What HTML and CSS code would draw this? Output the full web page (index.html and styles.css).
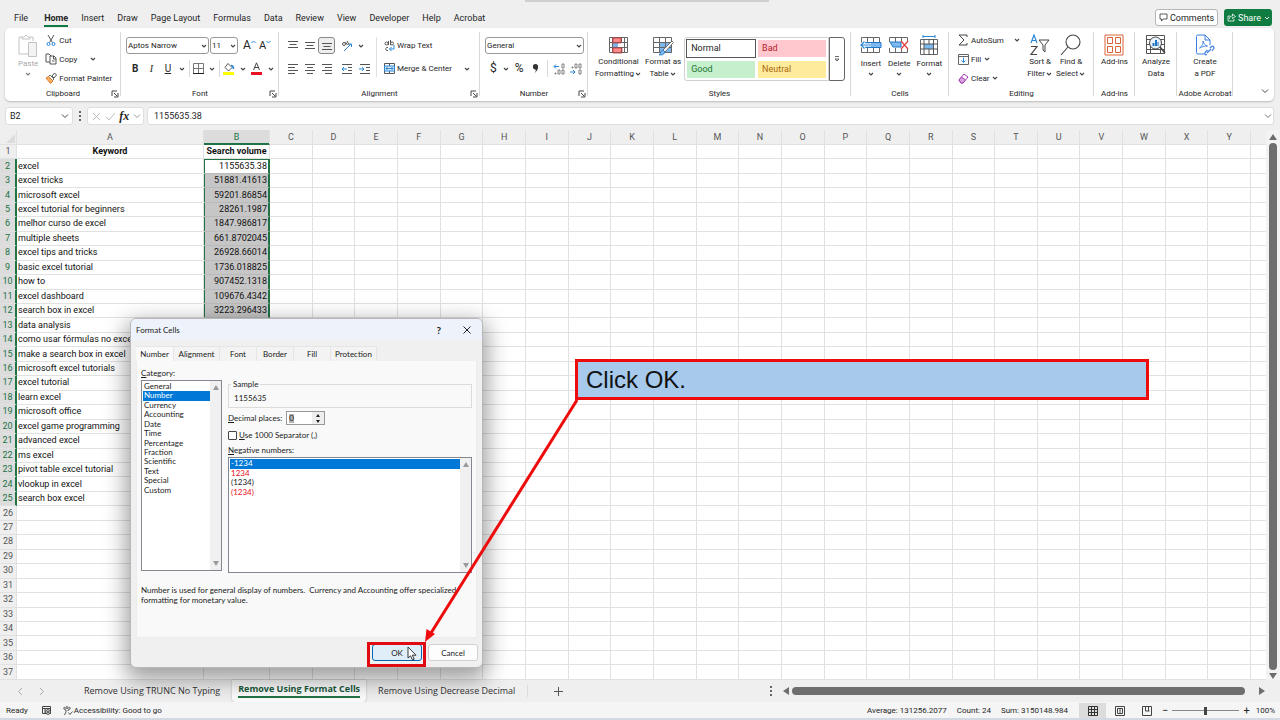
FILE: index.html
```html
<!DOCTYPE html>
<html lang="en">
<head>
<meta charset="utf-8">
<title>Excel - Format Cells</title>
<link rel="stylesheet" href="styles.css">
</head>
<body>
<svg class="defs" aria-hidden="true">
  <symbol id="chev" viewBox="0 0 8 8"><path d="M2 3l2 2 2-2" fill="none" stroke="#444" stroke-width="1.1"/></symbol>
  <symbol id="launch" viewBox="0 0 8 8"><path d="M1 6V1h5M3 3l3 3M7 3v4H3" fill="none" stroke="#444"/></symbol>
</svg>
<div class="app">
  <div class="grip"></div>
  <header class="menu">
    <nav class="tabs">
      <button class="file">File</button><button class="on">Home</button><button>Insert</button><button>Draw</button><button>Page Layout</button><button>Formulas</button><button>Data</button><button>Review</button><button>View</button><button>Developer</button><button>Help</button><button>Acrobat</button>
    </nav>
    <button class="comments"><svg width="9" height="9" viewBox="0 0 9 9"><path d="M1 1h7v5H4L2.500 8V6H1z" fill="none" stroke="#333" stroke-width=".8"/></svg>Comments</button>
    <button class="share"><svg width="9" height="9" viewBox="0 0 9 9"><path d="M3 3H1v5h6V6M2.500 6c0-2 1-3 3-3V1l3 2.500-3 2V4.200" fill="none" stroke="#fff" stroke-width=".8"/></svg>Share<svg width="8" height="8" viewBox="0 0 8 8"><path d="M2 3l2 2 2-2" fill="none" stroke="#fff"/></svg></button>
  </header>

  <section class="ribbon">
    <div class="group clip">
      <div class="body">
        <button class="big off"><svg width="20" height="24" viewBox="0 0 20 24"><path d="M4 3H1v17h9M12 3h3v4" fill="none" stroke="#aaa"/><path d="M4 5V3h2l2-2 2 2h2v2z" fill="#fff" stroke="#aaa"/><path d="M10.500 8.500h8v14h-8z" fill="#eee" stroke="#aaa"/></svg><span>Paste</span><svg width="8" height="8"><use href="#chev"/></svg></button>
        <div class="list">
          <button><svg width="12" height="12" viewBox="0 0 12 12"><path d="M3 1l4.500 7.500M9 1L4.500 8.500" stroke="#555" fill="none"/><circle cx="3.500" cy="10" r="1.500" fill="none" stroke="#2b88d8"/><circle cx="8.500" cy="10" r="1.500" fill="none" stroke="#2b88d8"/></svg>Cut</button>
          <button><svg width="12" height="12" viewBox="0 0 12 12"><path d="M5 9H1V1h3l2 2M5 3h4l2 2v6H5zM8.500 3v3H11M7 8h2.500" stroke="#444" fill="none" stroke-width=".9"/></svg>Copy<svg class="far" width="8" height="8"><use href="#chev"/></svg></button>
          <button><svg width="12" height="12" viewBox="0 0 12 12"><path d="M7 4l2.500-3 2 2L9 6z" fill="#fff" stroke="#444" stroke-width=".9"/><path d="M5 3l4 4-1.500 1.500-4-4z" fill="#fff" stroke="#444" stroke-width=".8"/><path d="M3.500 4.500L1 6l4.500 5.500L8 9z" fill="#f7b26a" stroke="#d8701a" stroke-width=".9"/></svg>Format Painter</button>
        </div>
      </div>
      <div class="foot">Clipboard<svg width="8" height="8"><use href="#launch"/></svg></div>
    </div>

    <div class="group font">
      <div class="body rows">
        <div class="row">
          <div class="combo name"><select aria-label="Font"><option>Aptos Narrow</option></select><svg width="8" height="8"><use href="#chev"/></svg></div>
          <div class="combo size"><select aria-label="Font size"><option>11</option></select><svg width="8" height="8"><use href="#chev"/></svg></div>
          <button class="grow" aria-label="Increase font size">A<svg width="5" height="4" viewBox="0 0 5 4"><path d="M.5 3l2-2 2 2" fill="none" stroke="#2b88d8"/></svg></button>
          <button class="shrink" aria-label="Decrease font size">A<svg width="5" height="4" viewBox="0 0 5 4"><path d="M.5 1l2 2 2-2" fill="none" stroke="#2b88d8"/></svg></button>
        </div>
        <div class="row biu">
          <button class="b">B</button><button class="i">I</button><button class="u">U</button><svg width="8" height="8"><use href="#chev"/></svg><i class="sep"></i>
          <svg width="11" height="11" viewBox="0 0 11 11"><path d="M.5.5h10v10H.5zM5.500 1v9M1 5.500h9" fill="none" stroke="#777"/><path d="M0 10.500h11" stroke="#222"/></svg><svg width="8" height="8"><use href="#chev"/></svg><i class="sep"></i>
          <svg width="12" height="13" viewBox="0 0 12 13"><path d="M5 1.500L9 5.500 5.500 9 2 5.500z" fill="#fff" stroke="#444" stroke-width=".9"/><path d="M8 3.500c2 0 2.500 2 2.500 3.500" stroke="#2b88d8" fill="none" stroke-width="1.500"/><path d="M0 10h11v3H0z" fill="#ffff00"/></svg><svg width="8" height="8"><use href="#chev"/></svg>
          <svg width="12" height="13" viewBox="0 0 12 13"><path d="M2.500 8L5.500.800 8.500 8M3.500 5.500h4" fill="none" stroke="#444"/><path d="M0 10h11v3H0z" fill="#e81123"/></svg><svg width="8" height="8"><use href="#chev"/></svg>
        </div>
      </div>
      <div class="foot">Font<svg width="8" height="8"><use href="#launch"/></svg></div>
    </div>

    <div class="group align">
      <div class="body">
        <div class="alignment-grid">
          <button aria-label="Top align"><svg width="11" height="11" viewBox="0 0 11 11"><path d="M1 1.500h10M2.500 4.500h7M1 7.500h10" stroke="#555"/></svg></button>
          <button aria-label="Middle align"><svg width="11" height="11" viewBox="0 0 11 11"><path d="M1 2.500h10M2.500 5.500h7M1 8.500h10" stroke="#555"/></svg></button>
          <button class="on" aria-label="Bottom align"><svg width="11" height="11" viewBox="0 0 11 11"><path d="M1 3.500h10M2.500 6.500h7M1 9.500h10" stroke="#555"/></svg></button>
          <button class="wide" aria-label="Orientation"><svg width="12" height="12" viewBox="0 0 12 12"><circle cx="3" cy="4" r="1.500" fill="none" stroke="#555"/><path d="M4.500 2l2 3M6 1l2.500 4.500" stroke="#555"/><path d="M3 11l7-7M7.500 4H10.500v3" fill="none" stroke="#2b88d8"/></svg><svg width="8" height="8"><use href="#chev"/></svg></button>
          <button aria-label="Align left"><svg width="11" height="11" viewBox="0 0 11 11"><path d="M1 1.500h10M1 4.500h7M1 7.500h10M1 10.500h7" stroke="#555"/></svg></button>
          <button aria-label="Center"><svg width="11" height="11" viewBox="0 0 11 11"><path d="M1 1.500h10M3 4.500h6M1 7.500h10M3 10.500h6" stroke="#555"/></svg></button>
          <button aria-label="Align right"><svg width="11" height="11" viewBox="0 0 11 11"><path d="M1 1.500h10M4 4.500h7M1 7.500h10M4 10.500h7" stroke="#555"/></svg></button>
          <div class="indent"><svg width="11" height="11" viewBox="0 0 11 11"><path d="M1 1.500h10M7 4.500h4M7 7.500h4M1 10.500h10" stroke="#555"/><path d="M6 6H1M3 4L1 6l2 2" fill="none" stroke="#2b88d8"/></svg><svg width="11" height="11" viewBox="0 0 11 11"><path d="M1 1.500h10M7 4.500h4M7 7.500h4M1 10.500h10" stroke="#555"/><path d="M0 6h5M3 4l2 2-2 2" fill="none" stroke="#2b88d8"/></svg></div>
        </div>
        <div class="wrapcol">
          <button><svg width="11" height="12" viewBox="0 0 11 12"><circle cx="2.500" cy="3.500" r="1.500" fill="none" stroke="#555"/><path d="M4.500 1v4M6.500 0v5" stroke="#555"/><circle cx="8" cy="3.500" r="1.500" fill="none" stroke="#555"/><path d="M4 7.500c-3-1-3 4 0 3" fill="none" stroke="#555"/><path d="M10 5v4H5.500M7.500 7l-2 2 2 2" fill="none" stroke="#2b88d8"/></svg>Wrap Text</button>
          <button><svg width="11" height="11" viewBox="0 0 11 11"><path d="M.5.5h10v10H.5zM5.500.500V3M5.500 8v3" fill="none" stroke="#555"/><path d="M.5 3h10v5H.5z" fill="#d5e9f9" stroke="#2b88d8"/><path d="M2 5.500h7M3.500 4L2 5.500 3.500 7M7.500 4L9 5.500 7.500 7" fill="none" stroke="#1a6fc0" stroke-width=".8"/></svg>Merge &amp; Center<svg class="far" width="8" height="8"><use href="#chev"/></svg></button>
        </div>
      </div>
      <div class="foot">Alignment<svg width="8" height="8"><use href="#launch"/></svg></div>
    </div>

    <div class="group num">
      <div class="body rows">
        <div class="combo"><select aria-label="Number format"><option>General</option></select><svg width="8" height="8"><use href="#chev"/></svg></div>
        <div class="row fmt"><button>$</button><svg width="8" height="8"><use href="#chev"/></svg><button>%</button><button class="comma" aria-label="Comma style"><svg width="7" height="11" viewBox="0 0 7 11"><path d="M1.500 10.500C4 9 4 7.500 3.500 6.500 0 6.500 0 1 3.500 1 7.500 1 7 8 1.500 10.500z" fill="#333"/></svg></button><i class="sep"></i>
          <svg width="12" height="12" viewBox="0 0 12 12"><path d="M6 3.500H1M3 1.500l-2 2 2 2" fill="none" stroke="#2b88d8"/><path d="M9 1h2v4H9zM5 7h2v4H5zM9 7h2v4H9zM2 10h1v1H2z" fill="none" stroke="#666" stroke-width=".8"/></svg>
          <svg width="12" height="12" viewBox="0 0 12 12"><path d="M0 9h5M3 7l2 2-2 2" fill="none" stroke="#2b88d8"/><path d="M5 1h2v4H5zM9 1h2v4H9zM9 7h2v4H9zM2 4h1v1H2z" fill="none" stroke="#666" stroke-width=".8"/></svg>
        </div>
      </div>
      <div class="foot">Number<svg width="8" height="8"><use href="#launch"/></svg></div>
    </div>

    <div class="group styles">
      <div class="body">
        <button class="big"><svg width="20" height="20" viewBox="0 0 20 20"><path d="M1 2h18v15H1z" fill="#fff"/><path d="M4 2h8v5H4zM4 12h9v5H4z" fill="#ff8a8a"/><path d="M4 7h5v5H4z" fill="#7db4ea"/><path d="M.500 1.500h18v15H.500zM0 6.500h19M0 11.500h19M3.500 1v16M12.500 1v6M12.500 12v5M15.500 1v16" fill="none" stroke="#666"/><path d="M4 2h8v5H4zM4 12h9v5H4z" fill="none" stroke="#d13438" stroke-width=".8"/></svg><span>Conditional<br>Formatting<svg width="8" height="8"><use href="#chev"/></svg></span></button>
        <button class="big"><svg width="21" height="20" viewBox="0 0 21 20"><path d="M7 6h12v11H7z" fill="#7db9ee"/><path d="M.500 1.500h18v15H.500zM0 6.500h19M0 11.500h19M6.500 1v16M12.500 1v16" fill="none" stroke="#666"/><path d="M19 5l1.500 1.500L12 16l-2-2z" fill="#fff" stroke="#555" stroke-width=".8"/><path d="M10 14l2 2c-1 3-3 3-6 3 2-1 1-4 4-5z" fill="#7db9ee" stroke="#2277c5" stroke-width=".8"/></svg><span>Format as<br>Table<svg width="8" height="8"><use href="#chev"/></svg></span></button>
        <div class="gallery">
          <div class="swatches"><button class="normal">Normal</button><button class="bad">Bad</button><button class="good">Good</button><button class="neutral">Neutral</button></div>
          <button class="more" aria-label="More styles"><svg width="8" height="8" viewBox="0 0 8 8"><path d="M2 1.500h4M2 4h4L4 6z" fill="none" stroke="#444" stroke-width=".8"/></svg></button>
        </div>
      </div>
      <div class="foot">Styles</div>
    </div>

    <div class="group cells">
      <div class="body">
        <button class="big"><svg width="22" height="20" viewBox="0 0 22 20"><path d="M1.500 1.500h18v15h-18zM7.500 1v16M13.500 1v16" fill="#fff" stroke="#666"/><path d="M4 6.500h17v5H4z" fill="#7db9ee" stroke="#2277c5"/><path d="M0 7h4v4H0z" fill="#fff"/><path d="M11 9H1M4.500 5.500L1 9l3.500 3.500" fill="none" stroke="#fff" stroke-width="3"/><path d="M11 9H1M4.500 5.500L1 9l3.500 3.500" fill="none" stroke="#2b88d8" stroke-width="1.200"/></svg><span>Insert</span><svg width="8" height="8"><use href="#chev"/></svg></button>
        <button class="big"><svg width="22" height="20" viewBox="0 0 22 20"><path d="M1.500 1.500h18v15h-18zM7.500 1v16M13.500 1v16" fill="#fff" stroke="#666"/><path d="M0 6h21v6H0z" fill="#fff"/><path d="M2 6h11v5H5z" fill="#7db9ee" stroke="#2277c5"/><path d="M13 5l7 8M20 5l-7 8" stroke="#e03c3c" stroke-width="1.200"/></svg><span>Delete</span><svg width="8" height="8"><use href="#chev"/></svg></button>
        <button class="big fm"><svg width="20" height="23" viewBox="0 0 20 23"><path d="M4 1.500h12M4 0v3M16 0v3" stroke="#2b88d8"/><path d="M1.500 4.500h17v15h-17z" fill="#fff" stroke="#666"/><path d="M5 9h9v5H5z" fill="#7db9ee"/><path d="M1 9h18M1 14h18M5 4v16M10 4v5M10 14v6M14.500 4v16" fill="none" stroke="#555"/></svg><span>Format</span><svg width="8" height="8"><use href="#chev"/></svg></button>
      </div>
      <div class="foot">Cells</div>
    </div>

    <div class="group edit">
      <div class="body">
        <div class="list">
          <button><svg width="11" height="12" viewBox="0 0 11 12"><path d="M9 3V1H1l5 5-5 5h8V9" fill="none" stroke="#444"/></svg>AutoSum<svg class="far" width="8" height="8"><use href="#chev"/></svg></button>
          <button><svg width="11" height="11" viewBox="0 0 11 11"><path d="M.500.500h10v10H.500zM1 2.500h9" fill="none" stroke="#666"/><path d="M5.500 3.500v5M3.500 6.500l2 2 2-2" fill="none" stroke="#2b88d8"/></svg>Fill<svg width="8" height="8"><use href="#chev"/></svg></button>
          <button><svg width="11" height="11" viewBox="0 0 11 11"><path d="M1 7l5-6 4 3-5 6H3z" fill="#fff" stroke="#a33bb5"/><path d="M1 7l2.500-3L7.500 7 5 10H3z" fill="#d9a3e0" stroke="#a33bb5"/></svg>Clear<svg width="8" height="8"><use href="#chev"/></svg></button>
        </div>
        <button class="big"><svg width="22" height="22" viewBox="0 0 22 22"><path d="M2 9l3-8 3 8M3 6.500h4" fill="none" stroke="#2b88d8" stroke-width="1.200"/><path d="M2 12.500h6L2 20.500h6" fill="none" stroke="#444" stroke-width="1.200"/><path d="M10 6h10l-4 5v7l-2-2v-5z" fill="#fff" stroke="#444"/></svg><span>Sort &amp;<br>Filter<svg width="8" height="8"><use href="#chev"/></svg></span></button>
        <button class="big"><svg width="22" height="22" viewBox="0 0 22 22"><circle cx="13" cy="8" r="7" fill="none" stroke="#444" stroke-width="1.100"/><path d="M8 13l-7 8" stroke="#444" stroke-width="1.100"/></svg><span>Find &amp;<br>Select<svg width="8" height="8"><use href="#chev"/></svg></span></button>
      </div>
      <div class="foot">Editing</div>
    </div>

    <div class="group">
      <div class="body"><button class="big"><svg width="20" height="22" viewBox="0 0 20 22"><path d="M1 1h18v20H1zM3.500 3.500h5v6h-5zM11.500 3.500h5v6h-5zM3.500 12.500h5v6h-5zM11.500 12.500h5v6h-5z" fill="none" stroke="#d9623b"/></svg><span>Add-ins</span></button></div>
      <div class="foot">Add-ins</div>
    </div>
    <div class="group">
      <div class="body"><button class="big"><svg width="20" height="22" viewBox="0 0 20 22"><path d="M.500 1.500h18v18H.500zM0 5.500h19M0 10.500h19M0 15.500h19M4.500 5v15M14.500 5v15" fill="none" stroke="#555"/><circle cx="9.500" cy="9" r="6" fill="#e8f2fb" stroke="#444"/><path d="M14 13l5 6" stroke="#444" stroke-width="1.500"/><path d="M6.500 9h2v3h-2zM9 6h2v6H9zM11.500 8h1v4h-1z" fill="#2277c5"/></svg><span>Analyze<br>Data</span></button></div>
      <div class="foot"></div>
    </div>
    <div class="group">
      <div class="body"><button class="big"><svg width="20" height="22" viewBox="0 0 20 22"><path d="M9 20H3q-1.500 0-1.500-1.500v-16Q1.500 1 3 1h7l5 5v5" fill="none" stroke="#3b7de0"/><path d="M10 1v5h5" fill="none" stroke="#3b7de0"/><path d="M4.500 14c3-2 4-5 3.500-7 1 3 2 4.500 4.500 5-3 0-5 .500-8 2z" fill="none" stroke="#3b7de0" stroke-width=".9"/><path d="M12 19l4-4M10.500 18l2-2M12 20.500c-2 1-3-1-1.500-2.500M15 14l1.500-1.500c2-1 3 1 2 2.500L17 17" fill="none" stroke="#3b7de0" stroke-width="1.200"/></svg><span>Create<br>a PDF</span></button></div>
      <div class="foot">Adobe Acrobat</div>
    </div>
    <button class="collapse" aria-label="Collapse ribbon"><svg width="8" height="6" viewBox="0 0 8 6"><path d="M1 1.500l3 3 3-3" fill="none" stroke="#444"/></svg></button>
  </section>

  <div class="fbar">
    <div class="box namebox"><input value="B2" aria-label="Name box"><svg width="8" height="6" viewBox="0 0 8 6"><path d="M1 1.500l3 3 3-3" fill="none" stroke="#444"/></svg></div>
    <div class="dots"><i></i><i></i><i></i></div>
    <div class="box fx"><svg width="9" height="9" viewBox="0 0 9 9"><path d="M1 1l7 7M8 1L1 8" stroke="#bbb"/></svg><svg width="11" height="9" viewBox="0 0 11 9"><path d="M1 5l3 3 6-7" fill="none" stroke="#bbb"/></svg><b>fx</b><svg width="8" height="6" viewBox="0 0 8 6"><path d="M1 1.500l3 3 3-3" fill="none" stroke="#999"/></svg></div>
    <div class="box formula"><input value="1155635.38" aria-label="Formula bar"><svg width="8" height="6" viewBox="0 0 8 6"><path d="M1 1.500l3 3 3-3" fill="none" stroke="#777"/></svg></div>
  </div>

  <div class="work">
    <div class="gridwrap"><table class="sheet">
      <colgroup id="cols"><col class="rh"><col class="ca"><col class="cb"></colgroup>
      <thead><tr id="heads"><th class="corner"><svg width="9" height="9" viewBox="0 0 9 9"><path d="M9 0v9H0z" fill="#dcdcdc"/></svg></th></tr></thead>
      <tbody id="rows"></tbody>
    </table></div>
    <div class="vscroll"><i class="up"></i><i class="thumb"></i><i class="down"></i></div>
  </div>

  <footer class="sheets">
    <div class="nav"><svg width="6" height="9" viewBox="0 0 6 9"><path d="M5 1L1.500 4.500 5 8" fill="none" stroke="#aaa"/></svg><svg width="6" height="9" viewBox="0 0 6 9"><path d="M1 1l3.500 3.500L1 8" fill="none" stroke="#aaa"/></svg></div>
    <button class="tab">Remove Using TRUNC No Typing</button>
    <button class="tab on"><span>Remove Using Format Cells</span></button>
    <button class="tab">Remove Using Decrease Decimal</button>
    <button class="plus" aria-label="New sheet"><svg width="9" height="9" viewBox="0 0 9 9"><path d="M4.500 0v9M0 4.500h9" stroke="#555"/></svg></button>
    <div class="dots"><i></i><i></i><i></i></div>
    <div class="hscroll"><i class="left"></i><i class="thumb"></i><i class="right"></i></div>
  </footer>

  <div class="status">
    <span>Ready</span>
    <svg class="rec" width="9" height="9" viewBox="0 0 9 9"><path d="M.500.500h8v7h-8zM1 2.500h7M3 3v5" fill="none" stroke="#444"/><circle cx="6" cy="6" r="2.300" fill="#fff" stroke="#333"/><circle cx="6" cy="6" r="1" fill="#333"/></svg>
    <svg class="acc" width="10" height="10" viewBox="0 0 10 10"><circle cx="4" cy="1.500" r="1" fill="none" stroke="#444" stroke-width=".8"/><path d="M1 3l2 1v2L1.500 9M7 3L5 4v1M5.500 6.500l1.500 2 2.500-3M1 3c-1-2 1-2 2-.5M7 3c1-2-1-2-2-.5" fill="none" stroke="#444" stroke-width=".9"/></svg>
    <span>Accessibility: Good to go</span>
    <span class="avg">Average: 131256.2077</span><span class="cnt">Count: 24</span><span class="sum">Sum: 3150148.984</span>
    <button class="view on" aria-label="Normal view"><svg width="10" height="10" viewBox="0 0 10 10"><path d="M.500.500h9v9h-9zM3.500 0v10M6.500 0v10M0 3.500h10M0 6.500h10" fill="none" stroke="#333"/></svg></button>
    <button class="view" aria-label="Page layout view"><svg width="10" height="10" viewBox="0 0 10 10"><path d="M.500.500h9v9h-9zM2.500 2.500h5v5h-5zM4 4h2M4 6h2" fill="none" stroke="#444"/></svg></button>
    <button class="view" aria-label="Page break view"><svg width="10" height="10" viewBox="0 0 10 10"><path d="M.500.500h9v9h-9zM3.500 0v5h4M6.500 0v5" fill="none" stroke="#444"/></svg></button>
    <div class="zoom"><span>−</span><input type="range" aria-label="Zoom" value="50"><span>+</span></div>
    <span class="pct">100%</span>
  </div>
</div>

<section class="dialog" role="dialog" aria-label="Format Cells">
  <div class="title"><span>Format Cells</span><button>?</button><button aria-label="Close"><svg width="8" height="8" viewBox="0 0 8 8"><path d="M.500.500l7 7M7.500.500l-7 7" stroke="#222"/></svg></button></div>
  <div class="dtabs"><button class="on">Number</button><button>Alignment</button><button>Font</button><button>Border</button><button>Fill</button><button>Protection</button></div>
  <div class="panel">
    <div class="cat-label"><u>C</u>ategory:</div>
    <div class="cols">
      <div class="lb cat">
        <ul role="listbox" aria-label="Category"><li>General</li><li class="sel">Number</li><li>Currency</li><li>Accounting</li><li>Date</li><li>Time</li><li>Percentage</li><li>Fraction</li><li>Scientific</li><li>Text</li><li>Special</li><li>Custom</li></ul>
        <div class="sb"><i class="up"></i><i class="down"></i></div>
      </div>
      <div class="opts">
        <fieldset><legend>Sample</legend>1155635</fieldset>
        <div class="dec"><label for="dp"><u>D</u>ecimal places:</label><div class="spin"><input id="dp" value="0"><div class="arrows"><i class="up"></i><i class="down"></i></div></div></div>
        <label class="sepchk"><input type="checkbox"><span><u>U</u>se 1000 Separator (,)</span></label>
        <div class="neg-label"><u>N</u>egative numbers:</div>
        <div class="lb neg">
          <ul role="listbox" aria-label="Negative numbers"><li class="sel">-1234</li><li class="red">1234</li><li>(1234)</li><li class="red">(1234)</li></ul>
          <div class="sb"><i class="up"></i><i class="down"></i></div>
        </div>
      </div>
    </div>
    <p>Number is used for general display of numbers.&nbsp; Currency and Accounting offer specialized formatting for monetary value.</p>
  </div>
  <div class="actions"><button class="ok">OK</button><button>Cancel</button></div>
</section>

<div class="callout">Click OK.</div>
<svg class="arrow" width="160" height="250" viewBox="0 0 160 250"><path d="M156 4L10 237" stroke="#ee0b0b" stroke-width="3"/><path d="M4 246l1.500-13 8.500 5z" fill="#ee0b0b"/></svg>
<div class="mark"></div>
<svg class="cursor" width="10" height="15" viewBox="0 0 10 15"><path d="M1 1v11l2.500-2.200L5.500 14l1.700-.8-1.900-4H9z" fill="#fff" stroke="#222" stroke-width=".9"/></svg>
<script src="app.js"></script>
</body>
</html>
```
FILE: styles.css
```css
* { box-sizing: border-box; }
html, body { height: 100%; }
body { margin: 0; position: relative; overflow: hidden; background: #efefef; color: #262626; font: 9px/12px Roboto, "Open Sans", sans-serif; }
button, input, select { font: inherit; color: inherit; border: 0; background: none; padding: 0; margin: 0; }
button { display: flex; align-items: center; white-space: nowrap; }
svg { flex: none; display: block; }
.defs { position: absolute; width: 0; height: 0; }
.app { height: 100vh; display: flex; flex-direction: column; border-bottom: 2px solid #d3d9e3; }
.grip { position: absolute; top: 0; left: 41%; width: 244px; height: 2px; background: #cfcfcf; }

.menu { height: 28px; display: flex; align-items: center; padding: 7px 8px 0 14px; gap: 6px; flex: none; }
.tabs { display: flex; gap: 13px; flex: 1; }
.tabs button { height: 18px; }
.tabs .file { margin-right: 3px; }
.tabs .on { font-weight: 700; box-shadow: inset 0 -2px #107c41; }
.comments, .share { height: 17px; border-radius: 3px; padding: 0 3px; gap: 2px; }
.comments { background: #fff; border: 1px solid #b5b5b5; }
.share { background: #107c41; color: #fff; padding: 0 1px 0 3px; }

.ribbon { position: relative; flex: none; height: 73px; margin: 0 6px 0 5px; background: #fff; border-radius: 5px; box-shadow: 0 1px 2px #bbb; display: grid; grid-template-columns: 116px 158px 201px 108px 263px 98px 145px 41px 42px 56px 1fr; font-size: 8px; line-height: 11px; }
.group { display: flex; flex-direction: column; position: relative; padding: 4px 0 0; }
.group::after { content: ""; position: absolute; right: 0; top: 4px; bottom: 5px; border-right: 1px solid #d8d8d8; }
.body { flex: 1; display: flex; align-items: flex-start; }
.foot { height: 13px; position: relative; text-align: center; white-space: nowrap; }
.foot svg { position: absolute; right: 2px; top: 2px; }
.row { display: flex; align-items: center; }
.sep { width: 1px; height: 17px; background: #d8d8d8; }
.list { display: flex; flex-direction: column; gap: 7px; }
.list button { height: 12px; gap: 2px; }
.list .far { margin-left: 10px; }
.big { flex-direction: column; align-items: center; text-align: center; line-height: 12px; }
.big span svg { display: inline-block; vertical-align: middle; }
.off { color: #aaa; }
.off svg { opacity: .7; }

.clip .body { padding: 2px 0 0 13px; gap: 7px; }
.combo { height: 17px; border: 1px solid #999; border-radius: 3px; display: flex; align-items: center; flex: none; }
.combo select { appearance: none; flex: 1; padding-left: 1px; min-width: 0; }
.rows { flex-direction: column; align-items: stretch; }
.font .body, .num .body { padding: 5px 4px 0 5px; gap: 6px; }
.font .name { width: 83px; }
.font .size { width: 28px; margin: 0 5px 0 1px; }
.grow, .shrink { align-items: flex-start; width: 16px; }
.grow { font-size: 12px; }
.shrink { font-size: 11px; }
.biu { height: 17px; gap: 4px; padding-left: 3px; }
.biu button { width: 13px; font-size: 10px; justify-content: center; }
.biu .b { font-weight: 700; }
.biu .i { font-style: italic; font-family: "Liberation Serif", serif; }
.biu .u { text-decoration: underline; }
.biu .sep { margin: 0 -1px; }

.align .body { padding: 5px 5px 0 5px; }
.alignment-grid { display: grid; grid-template-columns: 17px 17px 17px 40px; grid-auto-rows: 17px; row-gap: 6px; width: 93px; border-right: 1px solid #e0e0e0; }
.alignment-grid button { justify-content: center; }
.alignment-grid .on { border: 1px solid #888; border-radius: 3px; background: #eee; }
.alignment-grid .wide { justify-content: flex-start; padding-left: 6px; gap: 4px; }
.indent { display: flex; gap: 7px; padding-left: 6px; align-items: center; }
.wrapcol { flex: 1; display: flex; flex-direction: column; gap: 6px; padding-left: 7px; }
.wrapcol button { height: 17px; gap: 2px; }
.wrapcol .far { margin-left: 9px; }

.fmt { height: 17px; gap: 5px; padding-left: 5px; }
.fmt button { font-size: 12px; }
.fmt .comma { margin: 0 3px; }

.styles .body { padding: 4px 6px 0 7px; gap: 3px; }
.gallery { display: flex; flex: 1; height: 44px; margin-top: 1px; }
.swatches { flex: 1; display: grid; grid-template-columns: 1fr 1fr; grid-template-rows: 1fr 1fr; gap: 4px 3px; padding: 2px; border: 1px solid #d0d0d0; border-radius: 3px 0 0 3px; font-size: 9px; }
.swatches button { padding-left: 4px; }
.normal { outline: 1px solid #555; }
.bad { background: #ffc7ce; color: #b3202a; }
.good { background: #c6efce; color: #1c7430; }
.neutral { background: #ffeb9c; color: #a76a10; }
.more { width: 16px; border: 1px solid #666; border-radius: 0 3px 3px 0; justify-content: center; }

.cells .body { padding: 3px 5px 0 9px; gap: 6px; }
.cells .big:not(.fm) svg:first-child { margin: 1px 0 2px; }
.edit .body { padding: 2px 5px 0 9px; }
.edit .list { width: 73px; margin-right: 6px; }
.edit .list .far { margin-left: auto; margin-right: 8px; }
.edit .body > .big { margin-right: 3px; }
.edit .list button { margin-right: -8px; }
.group > .body:has(> .big:only-child) { justify-content: center; padding-top: 2px; }
.collapse { align-self: end; justify-self: end; margin: 0 5px 7px 0; }

.fbar { flex: none; height: 29px; padding: 6px 6px 5px 5px; display: flex; gap: 4px; }
.box { background: #fff; border: 1px solid #dedede; border-radius: 3px; display: flex; align-items: center; }
.box input { flex: 1; min-width: 0; }
.namebox { width: 68px; padding: 0 3px 0 4px; }
.dots { display: flex; flex-direction: column; gap: 2px; justify-content: center; width: 6px; align-items: center; }
.dots i { width: 2px; height: 2px; background: #666; }
.fx { width: 57px; padding: 0 2px 0 4px; justify-content: space-between; }
.fx b { font: italic 700 12px "Liberation Serif", serif; }
.formula { flex: 1; margin-left: -1px; padding: 0 1px 0 6px; }

.work { flex: 1; min-height: 0; display: flex; }
.gridwrap { flex: 1; overflow: hidden; background: #fff; }
.sheet { width: calc(100% + 28px); height: 100%; table-layout: fixed; border-collapse: separate; border-spacing: 0; font: 9px/11px Roboto, sans-serif; color: #111; }
.rh { width: 17px; }
.ca { width: 187px; }
.cb { width: 66px; }
.sheet th, .sheet td { padding: 0; border-right: 1px solid #e1e1e1; border-bottom: 1px solid #e1e1e1; white-space: nowrap; }
.sheet th { font-weight: 400; color: #555; background: #efefef; text-align: center; }
.sheet thead th { height: 15px; }
.corner svg { margin: 3px 0 0 6px; }
.sheet .hot { background: #dcdcdc; color: #217346; }
.sheet thead .hot { box-shadow: inset 0 -1px #217346; border-bottom-color: #217346; }
.sheet tbody .hot { border-right: 2px solid #217346; }
.sheet .k { padding-left: 1px; }
.sheet .v { text-align: right; padding-right: 1px; background: #c6c6c6; border-right: 2px solid #217346; border-bottom-color: #bababa; box-shadow: inset 1px 0 #217346; }
.sheet .first { background: #fff; box-shadow: inset 1px 1px #217346; }
.sheet .last { border-bottom-color: #217346; box-shadow: inset 1px -1px #217346; }
.sheet .hd { font-weight: 700; text-align: center; }

.vscroll { width: 14px; display: flex; flex-direction: column; align-items: center; padding: 4px 0 1px; gap: 3px; background: #f3f3f3; }
.thumb { flex: 1; background: #6e6e6e; border-radius: 4px; width: 8px; }
.up, .down { border: 4px solid transparent; width: 0; height: 0; }
.up { border-top: 0; border-bottom: 6px solid #6e6e6e; }
.down { border-bottom: 0; border-top: 6px solid #6e6e6e; }

.sheets { flex: none; height: 22px; display: flex; align-items: center; font: 9px/12px "Open Sans", sans-serif; color: #333; }
.nav { width: 84px; padding-left: 17px; display: flex; gap: 16px; }
.tab { height: 22px; padding-right: 12px; }
.tab.on { background: #fbfbfb; border-radius: 0 0 4px 4px; padding: 0 6px 3px; font-weight: 700; color: #17583a; margin-right: 12px; box-shadow: 0 0 2px #aaa; }
.tab.on span { border-bottom: 2px solid #217346; line-height: 15px; }
.tab:nth-of-type(3) { border-right: 1px solid #ddd; height: 12px; }
.plus { margin-left: 26px; }
.sheets .dots { margin-left: auto; }
.hscroll { width: 38%; display: flex; align-items: center; gap: 3px; padding: 0 4px 0 0; margin: 0 11px 0 9px; }
.hscroll .thumb { height: 8px; margin-right: 11px; }
.left, .right { border: 4px solid transparent; width: 0; height: 0; }
.left { border-left: 0; border-right: 6px solid #6e6e6e; }
.right { border-right: 0; border-left: 6px solid #6e6e6e; }

.status { flex: none; height: 16px; display: flex; align-items: center; padding: 1px 5px 0 6px; font-size: 8px; background: #f5f5f5; }
.rec { margin: 0 12px 0 14px; }
.acc { margin-right: 1px; }
.avg { margin-left: auto; }
.cnt, .sum { margin-left: 10px; }
.sum { margin-right: 11px; }
.view { width: 27px; height: 15px; justify-content: center; }
.view.on { background: #dcdcdc; }
.zoom { display: flex; align-items: center; margin: 0 6px 0 2px; gap: 4px; font-size: 11px; }
.zoom input { appearance: none; width: 67px; height: 1px; background: #888; }
.zoom input::-webkit-slider-thumb { appearance: none; width: 3px; height: 8px; background: #444; }

.dialog { position: absolute; left: 130px; top: 318px; width: 353px; background: #f0f0f0; border-radius: 6px; border: 1px solid #b8b8b8; box-shadow: 0 8px 22px 4px rgba(0,0,0,.38); font: 8px/10px Lato, "Open Sans", sans-serif; color: #1a1a1a; overflow: hidden; padding-bottom: 6px; }
.title { height: 21px; background: #eef2fa; display: flex; align-items: center; padding: 0 11px 0 5px; }
.title span { flex: 1; }
.title button { margin-left: 22px; font-weight: 700; font-size: 10px; }
.dtabs { display: flex; padding: 6px 5px 0 5px; }
.dtabs button { height: 15px; justify-content: center; background: #f3f3f3; border: 1px solid #e5e5e5; border-left: 0; border-bottom: 0; flex: 0 0 37px; }
.dtabs .on { background: #f9f9f9; flex-basis: 38px; }
.dtabs button:nth-child(2), .dtabs button:nth-child(6) { flex-basis: 46px; }
.panel { margin: 0 5px; padding: 7px 4px 0; height: 277px; background: #f9f9f9; border: 1px solid #ececec; border-top: 0; }
.cols { display: flex; gap: 6px; margin-top: 2px; }
.lb { border: 1px solid #828790; background: #fff; display: flex; }
.lb ul { list-style: none; margin: 0; padding: 1px 0 0 1px; flex: 1; display: grid; align-content: start; }
.lb li { padding-left: 1px; line-height: 9px; }
.lb .sel { background: #0078d7; color: #fff; }
.lb .red { color: #e81123; }
.cat { width: 81px; height: 191px; }
.cat ul { grid-template-rows: repeat(12, 1fr); height: 114px; }
.neg ul { grid-template-rows: repeat(4, 1fr); height: 39px; }
.sb { width: 11px; background: #f0f0f0; display: flex; flex-direction: column; justify-content: space-between; align-items: center; padding: 4px 0; }
.sb .up { border-width: 0 3px 5px; border-bottom-color: #999; }
.sb .down { border-width: 5px 3px 0; border-top-color: #999; }
.opts { flex: 1; display: flex; flex-direction: column; }
fieldset { margin: 0; height: 28px; border: 1px solid #dcdcdc; padding: 5px; min-width: 0; }
legend { padding: 0 2px; margin-left: -3px; line-height: 8px; }
.dec { display: flex; align-items: center; gap: 4px; margin-top: 3px; }
.spin { display: flex; width: 39px; height: 14px; border: 1px solid #999; background: #fff; }
.spin input { flex: 1; min-width: 0; padding-left: 2px; background: linear-gradient(#b5b5b5, #b5b5b5) 2px 50% / 5px 9px no-repeat; }
.arrows { width: 12px; display: flex; flex-direction: column; justify-content: space-around; align-items: center; background: #eee; }
.arrows .up { border-width: 0 2px 3px; border-bottom-color: #222; }
.arrows .down { border-width: 3px 2px 0; border-top-color: #222; }
.sepchk { display: flex; align-items: center; gap: 2px; margin-top: 5px; }
.sepchk input { appearance: none; width: 9px; height: 9px; border: 1px solid #444; background: #fff; border-radius: 1px; }
.neg-label { margin: 5px 0 2px; }
.neg { height: 116px; }
.panel p { margin: 12px 0 0; }
.actions { display: flex; justify-content: flex-end; gap: 6px; padding: 6px 4px 0; }
.actions button { width: 50px; height: 17px; background: #fdfdfd; border: 1px solid #d0d0d0; border-radius: 3px; justify-content: center; }
.actions .ok { background: #e0eef9; border-color: #0067b8; }

.callout { position: absolute; left: 575px; top: 359px; width: 574px; height: 41px; border: 3px solid #ee0b0b; background: #a6c9ec; color: #111; padding-left: 8px; font: 24px/35px "Liberation Sans", Arial, sans-serif; }
.arrow { position: absolute; left: 421px; top: 396px; }
.mark { position: absolute; left: 367px; top: 642px; width: 59px; height: 25px; border: 3px solid #e00b12; }
.cursor { position: absolute; left: 407px; top: 646px; }
```
FILE: app.js
```js
const keywords = [
  ["excel", "1155635.38"], ["excel tricks", "51881.41613"], ["microsoft excel", "59201.86854"],
  ["excel tutorial for beginners", "28261.1987"], ["melhor curso de excel", "1847.986817"],
  ["multiple sheets", "661.8702045"], ["excel tips and tricks", "26928.66014"],
  ["basic excel tutorial", "1736.018825"], ["how to", "907452.1318"],
  ["excel dashboard", "109676.4342"], ["search box in excel", "3223.296433"],
  ["data analysis", ""], ["como usar fórmulas no excel", ""], ["make a search box in excel", ""],
  ["microsoft excel tutorials", ""], ["excel tutorial", ""], ["learn excel", ""],
  ["microsoft office", ""], ["excel game programming", ""], ["advanced excel", ""],
  ["ms excel", ""], ["pivot table excel tutorial", ""], ["vlookup in excel", ""], ["search box excel", ""]
];
const letters = "ABCDEFGHIJKLMNOPQRSTUVWXYZ".split("");
const heads = document.getElementById("heads");
const body = document.getElementById("rows");

letters.forEach((letter, i) => {
  if (i > 1) document.getElementById("cols").append(document.createElement("col"));
  const th = document.createElement("th");
  th.textContent = letter === "Z" ? "" : letter;
  if (letter === "B") th.className = "hot";
  heads.append(th);
});

for (let r = 1; r <= 37; r++) {
  const tr = document.createElement("tr");
  const th = document.createElement("th");
  th.textContent = r;
  const entry = keywords[r - 2];
  if (entry) th.className = "hot";
  tr.append(th);
  letters.forEach((letter, i) => {
    const td = document.createElement("td");
    if (r === 1 && i < 2) {
      td.textContent = i ? "Search volume" : "Keyword";
      td.className = "hd";
    } else if (entry && i < 2) {
      td.textContent = entry[i];
      td.className = i ? "v" + (r === 2 ? " first" : "") + (r === 25 ? " last" : "") : "k";
    }
    tr.append(td);
  });
  body.append(tr);
}
```
